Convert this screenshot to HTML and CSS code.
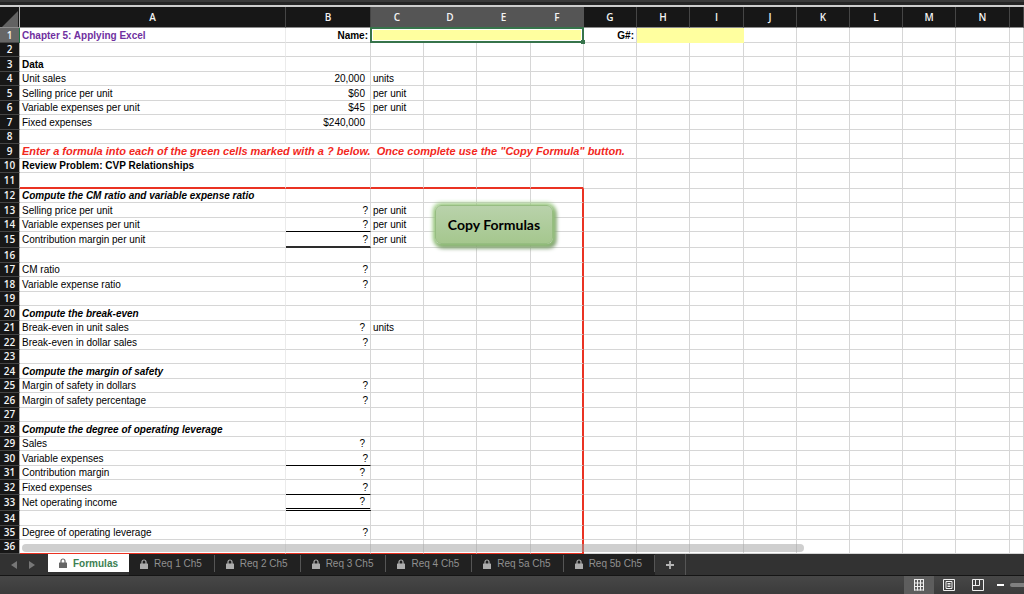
FILE: index.html
```html
<!DOCTYPE html>
<html lang="en">
<head>
<meta charset="utf-8">
<title>Chapter 5: Applying Excel</title>
<link rel="stylesheet" href="styles.css">
</head>
<body>
<svg class="defs" aria-hidden="true">
  <symbol id="lock" viewBox="0 0 8 10"><path d="M2 5V3a2 2 0 0 1 4 0v2" fill="none" stroke="currentColor" stroke-width="1.2"/><rect x="0" y="4.5" width="8" height="5.5" rx=".6" fill="currentColor"/></symbol>
</svg>
<div class="ribbon-edge"></div>
<main class="sheet">
  <table class="grid">
    <colgroup>
      <col class="c-num"><col class="c-a"><col class="c-b"><col class="c-std"><col class="c-std"><col class="c-wide"><col class="c-std"><col class="c-std"><col class="c-std"><col class="c-wide"><col class="c-std"><col class="c-std"><col class="c-std"><col class="c-std"><col class="c-wide"><col>
    </colgroup>
    <thead>
      <tr><th class="corner"><svg viewBox="0 0 16 16"><path d="M16 0v16H0z" fill="#626262"/></svg></th><th>A</th><th>B</th><th class="sel">C</th><th class="sel">D</th><th class="sel">E</th><th class="sel">F</th><th>G</th><th>H</th><th>I</th><th>J</th><th>K</th><th>L</th><th>M</th><th>N</th><th></th></tr>
    </thead>
    <tbody id="rows"></tbody>
  </table>
  <button class="copy" type="button">Copy Formulas</button>
  <div class="scroll"></div>
</main>
<nav class="tabs">
  <div class="arrows">
    <button type="button" aria-label="Previous sheet"><svg viewBox="0 0 6 8"><path d="M6 0v8L0 4z"/></svg></button>
    <button type="button" aria-label="Next sheet"><svg viewBox="0 0 6 8"><path d="M0 0v8l6-4z"/></svg></button>
  </div>
  <button type="button" class="tab active"><svg><use href="#lock"/></svg>Formulas</button>
  <button type="button" class="tab"><svg><use href="#lock"/></svg>Req 1 Ch5</button>
  <button type="button" class="tab"><svg><use href="#lock"/></svg>Req 2 Ch5</button>
  <button type="button" class="tab"><svg><use href="#lock"/></svg>Req 3 Ch5</button>
  <button type="button" class="tab"><svg><use href="#lock"/></svg>Req 4 Ch5</button>
  <button type="button" class="tab"><svg><use href="#lock"/></svg>Req 5a Ch5</button>
  <button type="button" class="tab"><svg><use href="#lock"/></svg>Req 5b Ch5</button>
  <button type="button" class="add" aria-label="Add sheet"><svg viewBox="0 0 8 8"><path d="M4 0v8M0 4h8" stroke="#b5b5b5" stroke-width="1.8"/></svg></button>
</nav>
<footer class="status">
  <button type="button" class="view on" aria-label="Normal view"><svg viewBox="0 0 12 12"><path d="M1.500 .5v11M4.500 .5v11M7.500 .5v11M10.500 .5v11M1 .5h10M1 4h10M1 7.500h10M1 11h10"/></svg></button>
  <button type="button" class="view" aria-label="Page layout"><svg viewBox="0 0 12 12"><path d="M.5 .5h11v11H.5zM3 2.500h6v7H3zM4.500 4.500h3M4.500 6h3M4.500 7.500h3"/></svg></button>
  <button type="button" class="view" aria-label="Page break preview"><svg viewBox="0 0 12 12"><path d="M.5 .5h11v11H.5zM3.500 .5v6M7.500 .5v6M.5 6.500h7"/></svg></button>
  <button type="button" class="minus" aria-label="Zoom out"><svg viewBox="0 0 7 2"><path d="M0 0h7v2H0z" fill="#fff"/></svg></button>
  <div class="zoom"><input type="range" aria-label="Zoom"></div>
</footer>
<script src="sheet.js"></script>
</body>
</html>
```

FILE: styles.css
```css
* { box-sizing: border-box; }
body {
  margin: 0;
  height: 100vh;
  display: flex;
  flex-direction: column;
  overflow: hidden;
  background: #fff;
  font-family: "Liberation Sans", Arial, sans-serif;
  font-size: 10px;
  color: #000;
}
button { border: 0; padding: 0; background: none; font: inherit; color: inherit; }
svg { display: block; }
.defs { position: absolute; width: 0; height: 0; }

.ribbon-edge {
  flex: none;
  height: 7px;
  background: linear-gradient(#3a3a3a 0 2px, #242424 2px 5px);
  border-bottom: 2px solid #cdcdcd;
}

.sheet { position: relative; flex: 1; min-height: 0; overflow: hidden; }
.grid { width: 100%; table-layout: fixed; border-collapse: separate; border-spacing: 0; }
.c-num { width: 20px; }
.c-a { width: 266px; }
.c-b { width: 85px; }
.c-std { width: 53px; }
.c-wide { width: 54px; }

.grid th {
  padding: 0;
  background: #171717;
  color: #f4f4f4;
  font-family: "Open Sans", "Noto Sans", sans-serif;
  font-weight: 600;
  font-size: 10px;
  line-height: 13px;
  border-right: 1px solid #454545;
  border-bottom: 1px solid #454545;
}
.grid thead th { height: 21px; border-bottom-color: #8c8c8c; }
.grid thead th.sel { background: #555; border-right-color: #555; }
.grid thead th.corner { vertical-align: bottom; border-right-color: #b0b0b0; }
.corner svg { width: 16px; height: 16px; margin-left: 2px; }
.grid tbody th { border-right-color: #b0b0b0; }
.grid tbody th.sel { background: #666; border-right-color: #217346; }

.grid td {
  padding: 0 2px;
  line-height: 13px;
  white-space: nowrap;
  border-right: 1px solid #d6d6d6;
  border-bottom: 1px solid #d6d6d6;
}
.h14 { height: 14px; }
.h15 { height: 15px; }
.h16 { height: 16px; }
.grid td.a { border-right-color: #ebebeb; }
.grid td.num { text-align: right; padding-right: 2px; }
.grid td.acct { padding-right: 5px; }
.bold { font-weight: 700; }
.head { font-weight: 700; font-style: italic; }
.title { font-weight: 700; color: #7030a0; }
.grid td.note { font-size: 11px; font-weight: 700; font-style: italic; color: #f2281d; border-right-color: #d6d6d6; }
.grid td.red-b { border-bottom: 2px solid #ea3323; }
.grid td.red-end { border-bottom-color: #ea3323; }
.grid td.red-r { border-right: 2px solid #ea3323; }
.grid td.line { border-bottom-color: #000; }
.grid td.thick { border-bottom: 2px solid #2d2d2d; }
.grid td.double { border-bottom: 3px double #000; line-height: 11px; }
.grid td.entry { padding: 0; background: #ffff9f; border-color: #ffff9f; }
.grid td.current { border: 0; position: relative; }
.entry input {
  display: block;
  width: 100%;
  height: 14px;
  padding: 0 2px;
  border: 0;
  outline: 0;
  background: none;
  font: inherit;
}
.current::before {
  content: "";
  position: absolute;
  inset: -1px 0 0 -1px;
  border: 2px solid #37744b;
  box-shadow: inset 0 0 0 1px #fff;
  pointer-events: none;
}
.current::after {
  content: "";
  position: absolute;
  right: -1px;
  bottom: -1px;
  width: 4px;
  height: 4px;
  background: #37744b;
}

.copy {
  position: absolute;
  left: 435px;
  top: 198px;
  width: 118px;
  height: 39px;
  border-radius: 6px;
  border: 1px solid #97bd82;
  background: linear-gradient(#b9d2ab, #a5c78e);
  box-shadow: 0 0 4px 2px #9bcb80, 2px 3px 4px 1px #6e8a60;
  font-family: Lato, "Noto Sans", sans-serif;
  font-weight: 700;
  font-size: 14px;
}
.scroll {
  position: absolute;
  left: 22px;
  right: 21.500%;
  bottom: 2px;
  height: 8px;
  border-radius: 4px;
  background: rgba(160, 160, 160, .5);
}

.tabs {
  flex: none;
  display: flex;
  height: 22px;
  background: #323232;
  border-bottom: 1px solid #151515;
}
.arrows { width: 48px; display: flex; gap: 12px; align-items: center; padding-left: 11px; }
.arrows svg { width: 6px; height: 8px; fill: #777; }
.tab {
  display: flex;
  align-items: center;
  gap: 6px;
  padding: 0 13px 2px 11px;
  background: #212121;
  color: #909090;
  position: relative;
}
.tab svg { width: 8px; height: 10px; color: #adadad; }
.tab + .tab::after {
  content: "";
  position: absolute;
  right: 0;
  top: 1px;
  width: 1px;
  height: 17px;
  background: #555;
}
.tab.active { background: #fff; color: #3b8052; font-weight: 700; margin-bottom: 3px; padding-bottom: 0; padding-right: 11px; }
.tab.active svg { color: #666; }
.add { width: 31px; display: grid; place-items: center; border-right: 1px solid #555; }
.add svg { width: 8px; height: 8px; }

.status {
  flex: none;
  display: flex;
  justify-content: flex-end;
  align-items: center;
  height: 18px;
  overflow: hidden;
  background: linear-gradient(#474747, #3b3b3b);
}
.view { width: 29px; height: 18px; display: grid; place-items: center; }
.view.on { width: 30px; background: #5d5d5d; }
.view svg { width: 12px; height: 12px; fill: none; stroke: #f0f0f0; stroke-width: 1; }
.minus { margin: 0 6px 0 5px; }
.minus svg { width: 7px; height: 2px; }
.zoom { width: 14px; overflow: hidden; display: flex; }
.zoom input {
  appearance: none;
  flex: none;
  width: 100px;
  height: 4px;
  margin: 0;
  border-radius: 2px;
  background: #808080;
}
.zoom input::-webkit-slider-thumb { appearance: none; width: 6px; height: 12px; background: #ddd; }
```

FILE: sheet.js
```js
// Cell contents by row: [A text, A class, B text, B class, C text]
const data = {
  1: ["Chapter 5: Applying Excel", "title"],
  3: ["Data", "bold"],
  4: ["Unit sales", "", "20,000", "acct", "units"],
  5: ["Selling price per unit", "", "$60", "acct", "per unit"],
  6: ["Variable expenses per unit", "", "$45", "acct", "per unit"],
  7: ["Fixed expenses", "", "$240,000", "acct"],
  10: ["Review Problem: CVP Relationships", "bold"],
  12: ["Compute the CM ratio and variable expense ratio", "head"],
  13: ["Selling price per unit", "", "?", "", "per unit"],
  14: ["Variable expenses per unit", "", "?", "line", "per unit"],
  15: ["Contribution margin per unit", "", "?", "thick", "per unit"],
  17: ["CM ratio", "", "?", ""],
  18: ["Variable expense ratio", "", "?", ""],
  20: ["Compute the break-even", "head"],
  21: ["Break-even in unit sales", "", "?", "acct", "units"],
  22: ["Break-even in dollar sales", "", "?", ""],
  24: ["Compute the margin of safety", "head"],
  25: ["Margin of safety in dollars", "", "?", ""],
  26: ["Margin of safety percentage", "", "?", ""],
  28: ["Compute the degree of operating leverage", "head"],
  29: ["Sales", "", "?", "acct"],
  30: ["Variable expenses", "", "?", "line"],
  31: ["Contribution margin", "", "?", "acct"],
  32: ["Fixed expenses", "", "?", "line"],
  33: ["Net operating income", "", "?", "acct double"],
  35: ["Degree of operating leverage", "", "?", ""]
};

const cell = (text = "", cls = "", span = 1) =>
  `<td class="${cls}" colspan="${span}">${text}</td>`;
const blanks = n => cell().repeat(n);

function height(r) {
  if (r === 11 || r === 15 || r === 33) return "h16";
  if (r === 36) return "h14";
  if (r === 34) return "h15";
  if (r < 16) return r % 2 ? "h15" : "h14";
  return r % 2 ? "h14" : "h15";
}

let html = "";
for (let r = 1; r <= 36; r++) {
  const [a, aCls = "", b, bCls = "", c] = data[r] || [];
  let row = `<th class="${r === 1 ? "sel" : ""}">${r}</th>`;
  if (r === 1) {
    row += cell(a, "a " + aCls)
      + cell('<label for="name">Name:</label>', "num bold")
      + cell('<input id="name" type="text">', "entry current", 4)
      + cell('<label for="gnum">G#:</label>', "num bold")
      + cell('<input id="gnum" type="text">', "entry", 2)
      + blanks(6);
  } else if (r === 9) {
    row += cell('Enter a formula into each of the green cells marked with a ? below.&nbsp; Once complete use the "Copy Formula" button.', "note", 7) + blanks(8);
  } else {
    const bottom = r === 11 ? " red-b" : r === 36 ? " red-end" : "";
    row += cell(a, "a " + aCls + bottom)
      + cell(b, "num " + bCls + bottom)
      + cell(c, bottom) + cell("", bottom).repeat(2)
      + cell("", bottom + (r > 11 ? " red-r" : ""))
      + blanks(9);
  }
  html += `<tr class="${height(r)}">${row}</tr>`;
}
document.getElementById("rows").innerHTML = html;
```
